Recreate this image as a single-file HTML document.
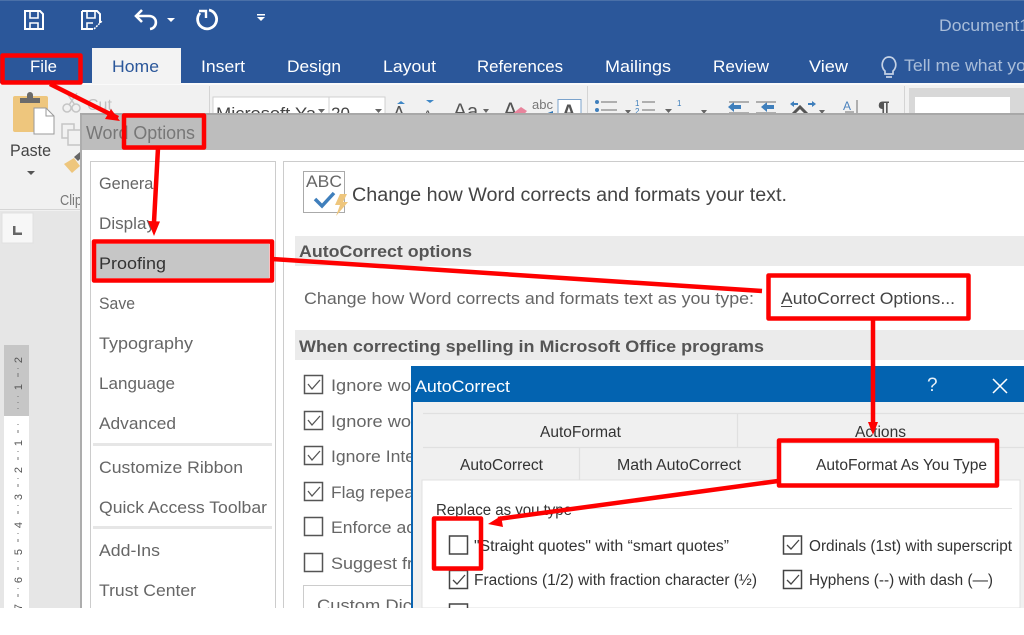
<!DOCTYPE html>
<html><head><meta charset="utf-8"><style>
html,body{margin:0;padding:0;background:#fff;overflow:hidden}
svg{display:block;font-family:"Liberation Sans",sans-serif;filter:blur(.3px)}
</style></head><body>
<svg width="1024" height="635" viewBox="0 0 1024 635" xmlns="http://www.w3.org/2000/svg">
<defs>
<clipPath id="c"><rect width="1024" height="608"/></clipPath>
<clipPath id="cd"><rect x="0" y="0" width="411" height="608"/></clipPath>
</defs>
<g clip-path="url(#c)">
<!-- base -->
<rect width="1024" height="608" fill="#e6e6e6"/>
<rect width="1024" height="83" fill="#2b579a"/>
<rect width="1024" height="1" fill="#4a70a8"/>
<rect y="83" width="1024" height="128" fill="#f1f1f1"/>
<rect x="0" y="83" width="1024" height="2" fill="#fafafa"/>
<rect x="92" y="48" width="89" height="36" fill="#f3f3f3"/>
<!-- QAT icons -->
<g fill="none" stroke="#fff" stroke-width="2">
<path d="M25 11h15l3 3v15H25z"/><path d="M30 12v6h8v-6M30 29v-6h8v6" stroke-width="1.600"/>
<path d="M82 11h15l3 3v9M82 11v18h11"/><path d="M87 12v6h8v-6M87 29v-6h6" stroke-width="1.600"/>
<path d="M94 29l8-8" stroke-width="1.500" stroke-dasharray="2 1"/>
<path d="M138 16h11c9 0 9 12 1 13" stroke-width="2.600"/><path d="M142 10l-6 6 6 6" stroke-width="2.600"/>
<path d="M200 13a9.500 9.500 0 1 0 9-3" stroke-width="2.800"/><path d="M199 11h7v7" stroke-width="2.400"/>
</g>
<path d="M167 18h8l-4 4zM257 17h8l-4 4z" fill="#fff"/><rect x="257" y="14" width="8" height="1.500" fill="#fff"/>
<!-- tabs -->
<g font-size="17" fill="#fff">
<text x="30" y="72" textLength="27" lengthAdjust="spacingAndGlyphs">File</text>
<text x="112" y="72" textLength="47" lengthAdjust="spacingAndGlyphs" fill="#2b579a">Home</text>
<text x="201" y="72" textLength="44" lengthAdjust="spacingAndGlyphs">Insert</text>
<text x="287" y="72" textLength="54" lengthAdjust="spacingAndGlyphs">Design</text>
<text x="383" y="72" textLength="53" lengthAdjust="spacingAndGlyphs">Layout</text>
<text x="477" y="72" textLength="86" lengthAdjust="spacingAndGlyphs">References</text>
<text x="605" y="72" textLength="66" lengthAdjust="spacingAndGlyphs">Mailings</text>
<text x="713" y="72" textLength="56" lengthAdjust="spacingAndGlyphs">Review</text>
<text x="809" y="72" textLength="39" lengthAdjust="spacingAndGlyphs">View</text>
<text x="904" y="71" textLength="122" lengthAdjust="spacingAndGlyphs" fill="#a9bdd9">Tell me what yo</text>
<text x="939" y="31" textLength="90" lengthAdjust="spacingAndGlyphs" fill="#a9bdd9">Document1</text>
</g>
<path d="M885 74v-3c-5-4-3-14 4-14s9 10 4 14v3zM886 77h6" fill="none" stroke="#c5d2e5" stroke-width="1.700"/>
<!-- ribbon -->
<rect x="209" y="86" width="1" height="40" fill="#d4d4d4"/><rect x="587" y="86" width="1" height="40" fill="#d4d4d4"/><rect x="904" y="86" width="1" height="40" fill="#d4d4d4"/>
<rect x="213" y="97" width="116" height="30" fill="#fff" stroke="#d0d0d0"/><rect x="329" y="97" width="56" height="30" fill="#fff" stroke="#d0d0d0"/>
<text x="216" y="119" font-size="17" fill="#444" textLength="100" lengthAdjust="spacingAndGlyphs">Microsoft Ya</text>
<text x="331" y="119" font-size="17" fill="#444">20</text>
<path d="M318 109h7l-3.500 4zM375 109h7l-3.500 4zM625 110h6l-3 4zM665 109h7l-3.500 4zM483 109h6l-3 4zM701 110h6l-3 4zM819 110h6l-3 4z" fill="#666"/>
<g fill="#555"><text x="393" y="119" font-size="18">A</text><text x="423" y="120" font-size="14">A</text><text x="453" y="118" font-size="21">A</text><text x="503" y="118" font-size="22">A</text><text x="561" y="118" font-size="21" font-weight="bold">A</text><text x="878" y="116" font-size="21" font-weight="bold">¶</text></g>
<path d="M793 114l7-7 7 7" fill="none" stroke="#555" stroke-width="3"/>
<text x="467" y="118" font-size="20" fill="#555">a</text>
<path d="M397 104l4-3 4 3zM426 100l4 3 4-3z" fill="#3f87c6"/>
<path d="M511 115l10-8 6 4-7 8h-7z" fill="#e8849c"/>
<text x="532" y="109" font-size="13" fill="#777">abc</text><path d="M545 114l8-3v8h-8z" fill="#2f77b8"/>
<rect x="558" y="99.500" width="23" height="20" fill="#fff" stroke="#7ba3cc"/><text x="562" y="118" font-size="19" fill="#555" font-weight="bold">A</text>
<g fill="#3f7fbc"><circle cx="597" cy="102" r="2"/><circle cx="597" cy="110" r="2"/><path d="M725 107l6-5v3h7v4h-7v3zM758 107l6 5v-3h7v-4h-7v-3z" transform="translate(3 0)"/><path d="M790 104l4-3v2h4v2h-4v2zM816 104l-4-3v2h-4v2h4v2z"/></g>
<path d="M601 102h16M601 110h16M642 102h13M642 110h13M729 102h20M729 113h20M756 102h20M756 113h20M857 100v13M845 112h9" stroke="#999" stroke-width="1.500"/>
<text x="635" y="106" font-size="8" fill="#3f7fbc">1</text><text x="635" y="114" font-size="8" fill="#3f7fbc">2</text><text x="677" y="106" font-size="8" fill="#3f7fbc">1</text>
<text x="843" y="110" font-size="12" fill="#4b82bd">A</text>
<rect x="909" y="88" width="115" height="30" fill="#d8d8d8"/><rect x="915" y="97" width="95" height="20" fill="#fff"/>
<!-- clipboard -->
<rect x="13" y="96" width="35" height="36" rx="2" fill="#eec67d"/>
<path d="M20 98h7v-3a3 3 0 0 1 6 0v3h7v5H20z" fill="#6b6b6b"/>
<path d="M34 108h12l8 8v18H34z" fill="#fff" stroke="#9a9a9a"/><path d="M46 108v8h8" fill="none" stroke="#9a9a9a"/>
<text x="10" y="156" font-size="17" fill="#444" textLength="41" lengthAdjust="spacingAndGlyphs">Paste</text>
<path d="M27 171h8l-4 4z" fill="#555"/>
<g fill="none" stroke="#c5c5c5" stroke-width="1.500"><circle cx="67" cy="108" r="4"/><circle cx="76" cy="108" r="4"/><path d="M69 105l8-12M75 105l-7-10"/><rect x="62" y="124" width="12" height="14"/><rect x="68" y="130" width="13" height="15" fill="#f1f1f1"/></g>
<text x="87" y="110" font-size="16" fill="#c0c0c0">Cut</text>
<path d="M64 164l10-6 6 8-8 7z" fill="#eec67d"/><path d="M74 157l6-5 3 4-5 5z" fill="#666"/>
<text x="60" y="205" font-size="15" fill="#777" textLength="22" lengthAdjust="spacingAndGlyphs">Clip</text>
<rect x="0" y="209" width="81" height="1" fill="#d6d6d6"/>
<rect x="2" y="213" width="31" height="30" fill="#f7f7f7" stroke="#e0e0e0"/>
<path d="M13 226v9h9v-2.500h-6.500V226z" fill="#666"/>
<!-- ruler -->
<rect x="4" y="345" width="25" height="71" fill="#c6c6c6"/><rect x="4" y="416" width="25" height="192" fill="#fff"/>
<g font-size="11" fill="#555" text-anchor="middle">
<text transform="translate(22 360) rotate(-90)">2</text><text transform="translate(22 387) rotate(-90)">1</text>
<text transform="translate(22 443) rotate(-90)">1</text><text transform="translate(22 470) rotate(-90)">2</text><text transform="translate(22 497) rotate(-90)">3</text><text transform="translate(22 525) rotate(-90)">4</text><text transform="translate(22 552) rotate(-90)">5</text><text transform="translate(22 580) rotate(-90)">6</text><text transform="translate(22 607) rotate(-90)">7</text>
</g>
<path d="M18 368v1M18 373v4M18 396v1M18 402v1M18 408v1M18 424v1M18 430v3M18 451v1M18 457v3M18 478v1M18 484v3M18 505v1M18 511v3M18 533v1M18 539v3M18 561v1M18 567v3M18 588v1M18 594v3" stroke="#777"/>
<!-- Word Options -->
<rect x="80" y="113" width="944" height="495" fill="#fff"/>
<rect x="80" y="113" width="2" height="495" fill="#adadad"/>
<rect x="80" y="113" width="944" height="2" fill="#a8a8a8"/>
<rect x="82" y="115" width="942" height="35" fill="#bdbdbd"/>
<text x="86" y="139" font-size="18" fill="#777" textLength="109" lengthAdjust="spacingAndGlyphs">Word Options</text>
<rect x="90.500" y="161.500" width="185" height="460" fill="#fff" stroke="#ccc"/>
<rect x="283.500" y="161.500" width="760" height="460" fill="#fff" stroke="#ccc"/>
<rect x="93" y="443" width="179" height="3" fill="#e6e6e6"/><rect x="93" y="526" width="179" height="3" fill="#e6e6e6"/>
<rect x="96" y="244" width="173" height="34" fill="#c6c6c6"/>
<g font-size="17" fill="#666">
<text x="99" y="189" textLength="58" lengthAdjust="spacingAndGlyphs">General</text>
<text x="99" y="229" textLength="56" lengthAdjust="spacingAndGlyphs">Display</text>
<text x="99" y="269" textLength="67" lengthAdjust="spacingAndGlyphs" fill="#333">Proofing</text>
<text x="99" y="309" textLength="36" lengthAdjust="spacingAndGlyphs">Save</text>
<text x="99" y="349" textLength="94" lengthAdjust="spacingAndGlyphs">Typography</text>
<text x="99" y="389" textLength="76" lengthAdjust="spacingAndGlyphs">Language</text>
<text x="99" y="429" textLength="77" lengthAdjust="spacingAndGlyphs">Advanced</text>
<text x="99" y="473" textLength="144" lengthAdjust="spacingAndGlyphs">Customize Ribbon</text>
<text x="99" y="513" textLength="168" lengthAdjust="spacingAndGlyphs">Quick Access Toolbar</text>
<text x="99" y="556" textLength="61" lengthAdjust="spacingAndGlyphs">Add-Ins</text>
<text x="99" y="596" textLength="97" lengthAdjust="spacingAndGlyphs">Trust Center</text>
</g>
<!-- ABC icon -->
<rect x="303.500" y="171.500" width="41" height="41" fill="#fff" stroke="#aaa"/>
<text x="306" y="187" font-size="17" fill="#666" textLength="36" lengthAdjust="spacingAndGlyphs">ABC</text>
<path d="M315 199l7 7 12-13" fill="none" stroke="#3f7fbc" stroke-width="3.500"/>
<path d="M340 194h7l-4 8h5l-12 14 4-11h-5z" fill="#eec67d"/>
<text x="352" y="201" font-size="19" fill="#444" textLength="435" lengthAdjust="spacingAndGlyphs">Change how Word corrects and formats your text.</text>
<rect x="295" y="236" width="729" height="30" fill="#ebebeb"/>
<rect x="295" y="330" width="729" height="30" fill="#ebebeb"/>
<text x="299" y="257" font-size="17" font-weight="bold" fill="#555" textLength="173" lengthAdjust="spacingAndGlyphs">AutoCorrect options</text>
<text x="299" y="352" font-size="17" font-weight="bold" fill="#555" textLength="465" lengthAdjust="spacingAndGlyphs">When correcting spelling in Microsoft Office programs</text>
<text x="304" y="304" font-size="17" fill="#666" textLength="450" lengthAdjust="spacingAndGlyphs">Change how Word corrects and formats text as you type:</text>
<text x="781" y="304" font-size="17" fill="#444" textLength="174" lengthAdjust="spacingAndGlyphs">AutoCorrect Options...</text>
<rect x="781" y="306" width="11" height="1" fill="#444"/>
<!-- options checkboxes -->
<g clip-path="url(#cd)">
<g fill="#fff" stroke="#555" stroke-width="1.500">
<rect x="304.500" y="375.500" width="18" height="18"/><rect x="304.500" y="411.500" width="18" height="18"/><rect x="304.500" y="446.500" width="18" height="18"/><rect x="304.500" y="482.500" width="18" height="18"/><rect x="304.500" y="517.500" width="18" height="18"/><rect x="304.500" y="553.500" width="18" height="18"/>
</g>
<path d="M308 384l4 5 8-9M308 420l4 5 8-9M308 455l4 5 8-9M308 491l4 5 8-9" fill="none" stroke="#555" stroke-width="1.300"/>
<g font-size="17" fill="#666">
<text x="331" y="391" textLength="80" lengthAdjust="spacingAndGlyphs">Ignore wo</text>
<text x="331" y="427" textLength="80" lengthAdjust="spacingAndGlyphs">Ignore wo</text>
<text x="331" y="462" textLength="84" lengthAdjust="spacingAndGlyphs">Ignore Inte</text>
<text x="331" y="498" textLength="83" lengthAdjust="spacingAndGlyphs">Flag repea</text>
<text x="331" y="533" textLength="84" lengthAdjust="spacingAndGlyphs">Enforce ac</text>
<text x="331" y="569" textLength="82" lengthAdjust="spacingAndGlyphs">Suggest fr</text>
<text x="317" y="611" textLength="100" lengthAdjust="spacingAndGlyphs">Custom Dict</text>
</g>
<rect x="303.500" y="585.500" width="200" height="50" fill="none" stroke="#ccc"/>
</g>
<!-- AutoCorrect dialog -->
<rect x="411" y="366" width="613" height="242" fill="#f0f0f0"/>
<rect x="411" y="366" width="2" height="242" fill="#0a63b0"/>
<rect x="411" y="366" width="613" height="36" fill="#0363b0"/>
<text x="415" y="392" font-size="17" fill="#fff" textLength="95" lengthAdjust="spacingAndGlyphs">AutoCorrect</text>
<text x="927" y="391" font-size="19" fill="#e8f0f8">?</text>
<path d="M993 379l14 14M1007 379l-14 14" stroke="#fff" stroke-width="1.500"/>
<path d="M423 413.500h601M423 447.500h601M737.500 414v33M579.500 448v32" stroke="#e0e0e0" stroke-width="1.300"/>
<rect x="422" y="480" width="598" height="128" fill="#fff" stroke="#e0e0e0"/>
<rect x="778" y="444" width="220" height="42" fill="#fff"/>
<g font-size="15.500" fill="#333">
<text x="540" y="437" textLength="81" lengthAdjust="spacingAndGlyphs">AutoFormat</text>
<text x="855" y="437" textLength="51" lengthAdjust="spacingAndGlyphs">Actions</text>
<text x="460" y="470" textLength="83" lengthAdjust="spacingAndGlyphs">AutoCorrect</text>
<text x="617" y="470" textLength="124" lengthAdjust="spacingAndGlyphs">Math AutoCorrect</text>
<text x="816" y="470" textLength="171" lengthAdjust="spacingAndGlyphs">AutoFormat As You Type</text>
<text x="436" y="515" textLength="136" lengthAdjust="spacingAndGlyphs">Replace as you type</text>
<text x="474" y="551" textLength="255" lengthAdjust="spacingAndGlyphs">"Straight quotes" with “smart quotes”</text>
<text x="474" y="585" textLength="283" lengthAdjust="spacingAndGlyphs">Fractions (1/2) with fraction character (½)</text>
<text x="809" y="551" textLength="203" lengthAdjust="spacingAndGlyphs">Ordinals (1st) with superscript</text>
<text x="809" y="585" textLength="184" lengthAdjust="spacingAndGlyphs">Hyphens (--) with dash (—)</text>
</g>
<rect x="575" y="508" width="437" height="1" fill="#e2e2e2"/>
<g fill="#fff" stroke="#444" stroke-width="1.500">
<rect x="449.500" y="536" width="18" height="18"/><rect x="449.500" y="570.500" width="18" height="18"/><rect x="449.500" y="604" width="18" height="18"/><rect x="783.500" y="536" width="18" height="18"/><rect x="783.500" y="570.500" width="18" height="18"/>
</g>
<path d="M453 580l4 4 8-9M787 545l4 4 8-9M787 580l4 4 8-9" fill="none" stroke="#444" stroke-width="1.300"/>
<!-- red annotations -->
<g fill="none" stroke="#fe0000" stroke-width="4.500" stroke-linejoin="round">
<rect x="2.500" y="55.500" width="78" height="27"/>
<rect x="124" y="115.500" width="80" height="32"/>
<rect x="94" y="241.500" width="178" height="39"/>
<rect x="768.500" y="275.500" width="200" height="43"/>
<rect x="779" y="440.500" width="218" height="45"/>
<rect x="434" y="518.500" width="47" height="50"/>
<path d="M50 84l68 34M158 148l-4 74M272 259l490 32M873 319v105M778 481l-280 38"/>
</g>
<path d="M120 121l-15-2 6-10zM154 236l-6-15 12 .5zM873 435l-5-13h10zM488 524l13-8 2 11z" fill="#fe0000"/>
</g>
<rect y="608" width="1024" height="27" fill="#fff"/>
</svg>
</body></html>
